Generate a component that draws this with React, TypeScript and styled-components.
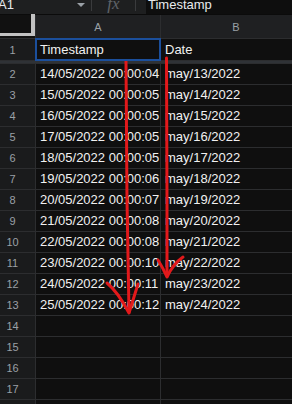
import React from "react";
import styled, { createGlobalStyle } from "styled-components";

const Global = createGlobalStyle`
  html, body { margin: 0; padding: 0; background: #111111; }
  body { font-family: "Liberation Sans", Arial, sans-serif; overflow: hidden; }
`;

const Page = styled.div`
  position: relative;
  width: 292px;
  height: 404px;
  overflow: hidden;
  background: #111111;
`;

const FormulaBar = styled.div`
  display: flex;
  align-items: flex-start;
  height: 14px;
  background: #1e1f20;
  border-bottom: 1px solid #0b0b0b;
  overflow: hidden;
`;

const NameBox = styled.div`
  display: flex;
  align-items: flex-start;
  width: 93px;
  margin-left: -2px;
  flex: none;
`;

const BarText = styled.span<{ $color?: string }>`
  font-size: 13px;
  line-height: 15px;
  margin-top: -3px;
  color: ${(p) => p.$color ?? "#e8eaed"};
  white-space: nowrap;
`;

const Caret = styled.span`
  margin-left: auto;
  margin-right: 6px;
  margin-top: 3px;
  width: 0;
  height: 0;
  border-left: 4px solid transparent;
  border-right: 4px solid transparent;
  border-top: 4px solid #9aa0a6;
`;

const Divider = styled.span`
  width: 1px;
  height: 11px;
  background: #3a3b3d;
  flex: none;
`;

const Fx = styled.span`
  width: 43px;
  flex: none;
  text-align: center;
  font-family: "Liberation Serif", "Times New Roman", serif;
  font-style: italic;
  font-size: 17px;
  line-height: 15px;
  margin-top: -4px;
  color: #5f6368;
`;

const Input = styled.div`
  flex: 1;
  height: 14px;
  margin-left: 10px;
  padding-left: 2px;
  background: #0e0e0e;
  display: flex;
  align-items: flex-start;
`;

const Grid = styled.div`
  display: grid;
  grid-template-columns: 35px 124px 150px;
  grid-template-rows: 23px 21px 2px;
  grid-auto-rows: 20px;
  gap: 1px;
  background: #2c2d2f;
  width: 311px;
`;

const Corner = styled.div`
  background: #111111;
  position: relative;
  &::before {
    content: "";
    position: absolute;
    right: 0;
    top: -1px;
    width: 4px;
    height: 22px;
    background: #c2c2c2;
  }
  &::after {
    content: "";
    position: absolute;
    left: 0;
    top: 18px;
    width: 35px;
    height: 3px;
    background: #c2c2c2;
  }
`;

const ColHead = styled.div`
  background: #1f2022;
  color: #9aa0a6;
  font-size: 11px;
  display: flex;
  align-items: center;
  justify-content: center;
`;

const RowHead = styled.div`
  background: #1a1b1c;
  color: #9aa0a6;
  font-size: 11px;
  display: flex;
  align-items: center;
  justify-content: center;
  padding-right: 10px;
`;

const Cell = styled.div<{ $selected?: boolean }>`
  background: #0f0f0f;
  color: #f1f1f1;
  font-size: 13px;
  line-height: 20px;
  padding-left: 4px;
  white-space: nowrap;
  overflow: hidden;
  display: flex;
  align-items: center;
  ${(p) =>
    p.$selected &&
    `outline: 2px solid #1b4f9c; outline-offset: -1px; position: relative; z-index: 1;`}
`;

const Freeze = styled.div`
  grid-column: 1 / -1;
  background: #2f3236;
`;

const Overlay = styled.svg`
  position: absolute;
  left: 0;
  top: 0;
  pointer-events: none;
`;

const rows: [string, string][] = [
  ["14/05/2022 00:00:04", "may/13/2022"],
  ["15/05/2022 00:00:05", "may/14/2022"],
  ["16/05/2022 00:00:05", "may/15/2022"],
  ["17/05/2022 00:00:05", "may/16/2022"],
  ["18/05/2022 00:00:05", "may/17/2022"],
  ["19/05/2022 00:00:06", "may/18/2022"],
  ["20/05/2022 00:00:07", "may/19/2022"],
  ["21/05/2022 00:00:08", "may/20/2022"],
  ["22/05/2022 00:00:08", "may/21/2022"],
  ["23/05/2022 00:00:10", "may/22/2022"],
  ["24/05/2022 00:00:11", "may/23/2022"],
  ["25/05/2022 00:00:12", "may/24/2022"],
  ["", ""],
  ["", ""],
  ["", ""],
  ["", ""],
  ["", ""],
];

export default function App() {
  return (
    <>
      <Global />
      <Page>
        <FormulaBar>
          <NameBox>
            <BarText>A1</BarText>
            <Caret />
          </NameBox>
          <Divider />
          <Fx>fx</Fx>
          <Divider />
          <Input>
            <BarText>Timestamp</BarText>
          </Input>
        </FormulaBar>
        <Grid>
          <Corner />
          <ColHead>A</ColHead>
          <ColHead>B</ColHead>
          <RowHead>1</RowHead>
          <Cell $selected>Timestamp</Cell>
          <Cell>Date</Cell>
          <Freeze />
          {rows.map(([a, b], i) => (
            <React.Fragment key={i}>
              <RowHead>{i + 2}</RowHead>
              <Cell>{a}</Cell>
              <Cell>{b}</Cell>
            </React.Fragment>
          ))}
        </Grid>
        <Overlay width="292" height="404" viewBox="0 0 292 404">
          <g
            fill="none"
            stroke="#e2191b"
            strokeWidth="3"
            strokeLinecap="round"
            strokeLinejoin="round"
          >
            <path d="M126 61 L127 200 L129 312" />
            <path d="M107 283 Q118 292 129 313 L138 284" />
            <path d="M166.5 58 L167 200 L167 276" />
            <path d="M158 260 Q163 268 167 277 Q173 264 183 257" />
          </g>
        </Overlay>
      </Page>
    </>
  );
}
